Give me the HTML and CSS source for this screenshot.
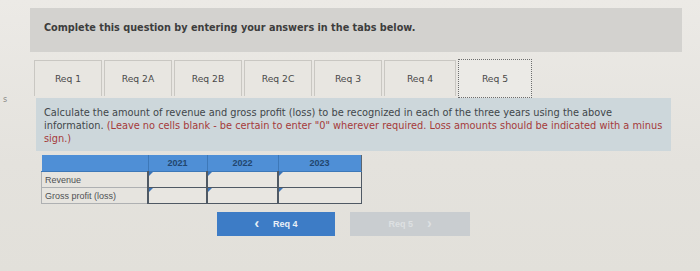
FILE: index.html
```html
<!DOCTYPE html>
<html>
<head>
<meta charset="utf-8">
<link rel="stylesheet" href="styles.css">
</head>
<body>
<div class="side-s">s</div>
<div class="page">
  <div class="header">Complete this question by entering your answers in the tabs below.</div>
  <div class="tabs">
    <div class="tab">Req 1</div>
    <div class="tab">Req 2A</div>
    <div class="tab">Req 2B</div>
    <div class="tab">Req 2C</div>
    <div class="tab">Req 3</div>
    <div class="tab">Req 4</div>
    <div class="tab active">Req 5</div>
  </div>
  <div class="panel">
    <p>Calculate the amount of revenue and gross profit (loss) to be recognized in each of the three years using the above information. <span class="red">(Leave no cells blank - be certain to enter "0" wherever required. Loss amounts should be indicated with a minus sign.)</span></p>
  </div>
  <table class="grid">
    <tr class="head"><th class="lbl"></th><th class="c1">2021</th><th class="c2">2022</th><th class="c3">2023</th></tr>
    <tr><td class="lbl">Revenue</td><td class="in"></td><td class="in"></td><td class="in"></td></tr>
    <tr><td class="lbl">Gross profit (loss)</td><td class="in"></td><td class="in"></td><td class="in"></td></tr>
  </table>
  <div class="nav">
    <div class="btn prev"><span class="chev">&lsaquo;</span><span>Req 4</span></div>
    <div class="btn next"><span>Req 5</span><span class="chev">&rsaquo;</span></div>
  </div>
</div>
</body>
</html>
```
FILE: styles.css
```css
html, body { margin: 0; padding: 0; }
body {
  width: 700px; height: 271px; overflow: hidden;
  background: linear-gradient(180deg, #eceae6 0%, #e4e2dd 60%, #e2e0da 100%);
  font-family: "DejaVu Sans", Verdana, sans-serif;
  position: relative;
}
.side-s {
  position: absolute; left: 3px; top: 95px;
  font-size: 8px; color: #8a8a88;
}
.page { padding: 8px 0 0 30px; }
.header {
  width: 652px; height: 44px; box-sizing: border-box;
  background: #d3d2cf;
  padding: 14px 0 0 14px;
  font-weight: bold; font-size: 9.7px; color: #3d3d3d;
}
.tabs { display: flex; margin: 7px 0 0 4px; gap: 2px; align-items: flex-start; }
.tab {
  width: 68px; height: 36px; box-sizing: border-box;
  margin-top: 1px;
  border: 1px solid #c9c7c2; border-bottom: none;
  background: #e8e6e1;
  display: flex; align-items: center; justify-content: center;
  font-size: 9.2px; color: #4a4a4a;
}
.tab:nth-child(6) { width: 72px; }
.tab.active {
  width: 74px; height: 39px; margin-top: 0;
  border: 1px dotted #6d6d6d;
  background: #ebeae6;
}
.panel {
  width: 635px; height: 53px; box-sizing: border-box;
  margin: 0 0 0 6px;
  background: #cdd7db;
  padding: 8px 8px 0 8px;
}
.panel p { margin: 0; font-size: 9.8px; line-height: 13px; color: #41464a; }
.red { color: #a53a3a; }
.grid {
  border-collapse: collapse; margin: 4px 0 0 11px;
  font-family: "Liberation Sans", Arial, sans-serif; font-size: 9px;
}
.grid th {
  background: #4f8fd6; color: #22466e; font-weight: bold;
  height: 16px; padding: 0; border: 1px solid #3d78b8; border-top: none;
}
.grid th.lbl { width: 106px; border-left: none; }
.grid th.c1 { width: 58px; }
.grid th.c2 { width: 70px; }
.grid th.c3 { width: 82px; border-right: 1px solid #5a6570; }
.grid td { height: 15px; padding: 0; }
.grid td.lbl {
  border: 1px solid #aeb0b2; color: #4e5154; padding-left: 3px;
  background: #e6e4df;
}
.grid td.in {
  border: 1px solid #4f5964; border-width: 1px 1px 1px 2px;
  background: #e8e6e1; position: relative;
}
.grid td.in::before {
  content: ""; position: absolute; left: 0; top: 0;
  border-left: 4px solid #3c74b8; border-bottom: 4px solid transparent;
}
.nav { display: flex; gap: 15px; margin: 8px 0 0 187px; }
.btn {
  width: 118px; height: 24px; box-sizing: border-box;
  display: flex; align-items: center; justify-content: center; gap: 14px;
  font-family: "Liberation Sans", Arial, sans-serif; font-weight: bold; font-size: 9px;
}
.prev { background: #3d7cc6; color: #e9f0f8; }
.next { width: 120px; background: #c9cdd0; color: #dde0e2; }
.chev { font-size: 14px; font-weight: bold; line-height: 1; margin-top: -2px; }
```
